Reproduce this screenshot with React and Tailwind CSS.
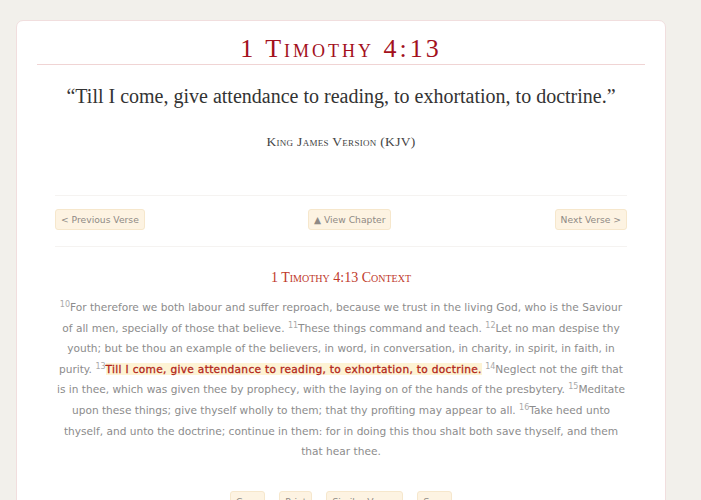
const context = [
  { n: 10, text: 'For therefore we both labour and suffer reproach, because we trust in the living God, who is the Saviour of all men, specially of those that believe.' },
  { n: 11, text: 'These things command and teach.' },
  { n: 12, text: 'Let no man despise thy youth; but be thou an example of the believers, in word, in conversation, in charity, in spirit, in faith, in purity.' },
  { n: 13, text: 'Till I come, give attendance to reading, to exhortation, to doctrine.', current: true },
  { n: 14, text: 'Neglect not the gift that is in thee, which was given thee by prophecy, with the laying on of the hands of the presbytery.' },
  { n: 15, text: 'Meditate upon these things; give thyself wholly to them; that thy profiting may appear to all.' },
  { n: 16, text: 'Take heed unto thyself, and unto the doctrine; continue in them: for in doing this thou shalt both save thyself, and them that hear thee.' },
];

const sans = { fontFamily: '"DejaVu Sans", Verdana, sans-serif' };
const caps = { fontFamily: '"Liberation Serif", serif', fontVariant: 'small-caps' };

function NavButton({ children }) {
  return (
    <button
      className="h-[21px] rounded-[3px] border border-[#f6e7cc] bg-[#fdf3e2] px-[5px] text-[9.2px] leading-none text-[#8f8a85]"
      style={sans}
    >
      {children}
    </button>
  );
}

export default function App() {
  return (
    <div className="h-[500px] overflow-hidden bg-[#f2f0eb] pt-[20px] pl-[16px]">
      <div className="w-[650px] rounded-t-[7px] border border-[#f1dede] bg-white px-[20px] pb-10">
        <h1
          className="mt-[16px] border-b border-[#f0d4d4] pb-[3px] text-center text-[26px] leading-[24px] tracking-[3px] text-[#a3101c]"
          style={caps}
        >
          1 Timothy 4:13
        </h1>

        <div className="px-[18px]">
          <p
            className="mt-[17px] text-center text-[20px] leading-[28px] text-[#333]"
            style={{ fontFamily: '"Liberation Serif", serif' }}
          >
            “Till I come, give attendance to reading, to exhortation, to doctrine.”
          </p>

          <p className="mt-[23px] text-center text-[13.5px] leading-[18px] tracking-[0.3px] text-[#444]" style={caps}>
            King James Version (KJV)
          </p>

          <div className="mt-[44px] flex items-center justify-between border-y border-[#f5f3f1] pt-[13px] pb-[16px]">
            <NavButton>&lt; Previous Verse</NavButton>
            <NavButton>▲ View Chapter</NavButton>
            <NavButton>Next Verse &gt;</NavButton>
          </div>

          <h2 className="mt-[22px] text-center text-[14px] leading-[18px] text-[#c0392b]" style={caps}>
            1 Timothy 4:13 Context
          </h2>

          <p className="mt-[10px] text-center text-[10.6px] leading-[20.6px] text-[#8c8c8c]" style={sans}>
            {context.map((v) => (
              <span key={v.n}>
                <sup className="text-[8px] text-[#aaa]">{v.n}</sup>
                {v.current ? (
                  <span className="bg-[#fdf3d4] tracking-[0.32px] text-[#b3261a] [-webkit-text-stroke:0.3px_#b3261a]">
                    {v.text}
                  </span>
                ) : (
                  v.text
                )}{' '}
              </span>
            ))}
          </p>

          <div className="mt-[29px] flex justify-center gap-[14px]">
            <NavButton>Copy</NavButton>
            <NavButton>Print</NavButton>
            <NavButton>Similar Verses</NavButton>
            <NavButton>Save</NavButton>
          </div>
        </div>
      </div>
    </div>
  );
}
